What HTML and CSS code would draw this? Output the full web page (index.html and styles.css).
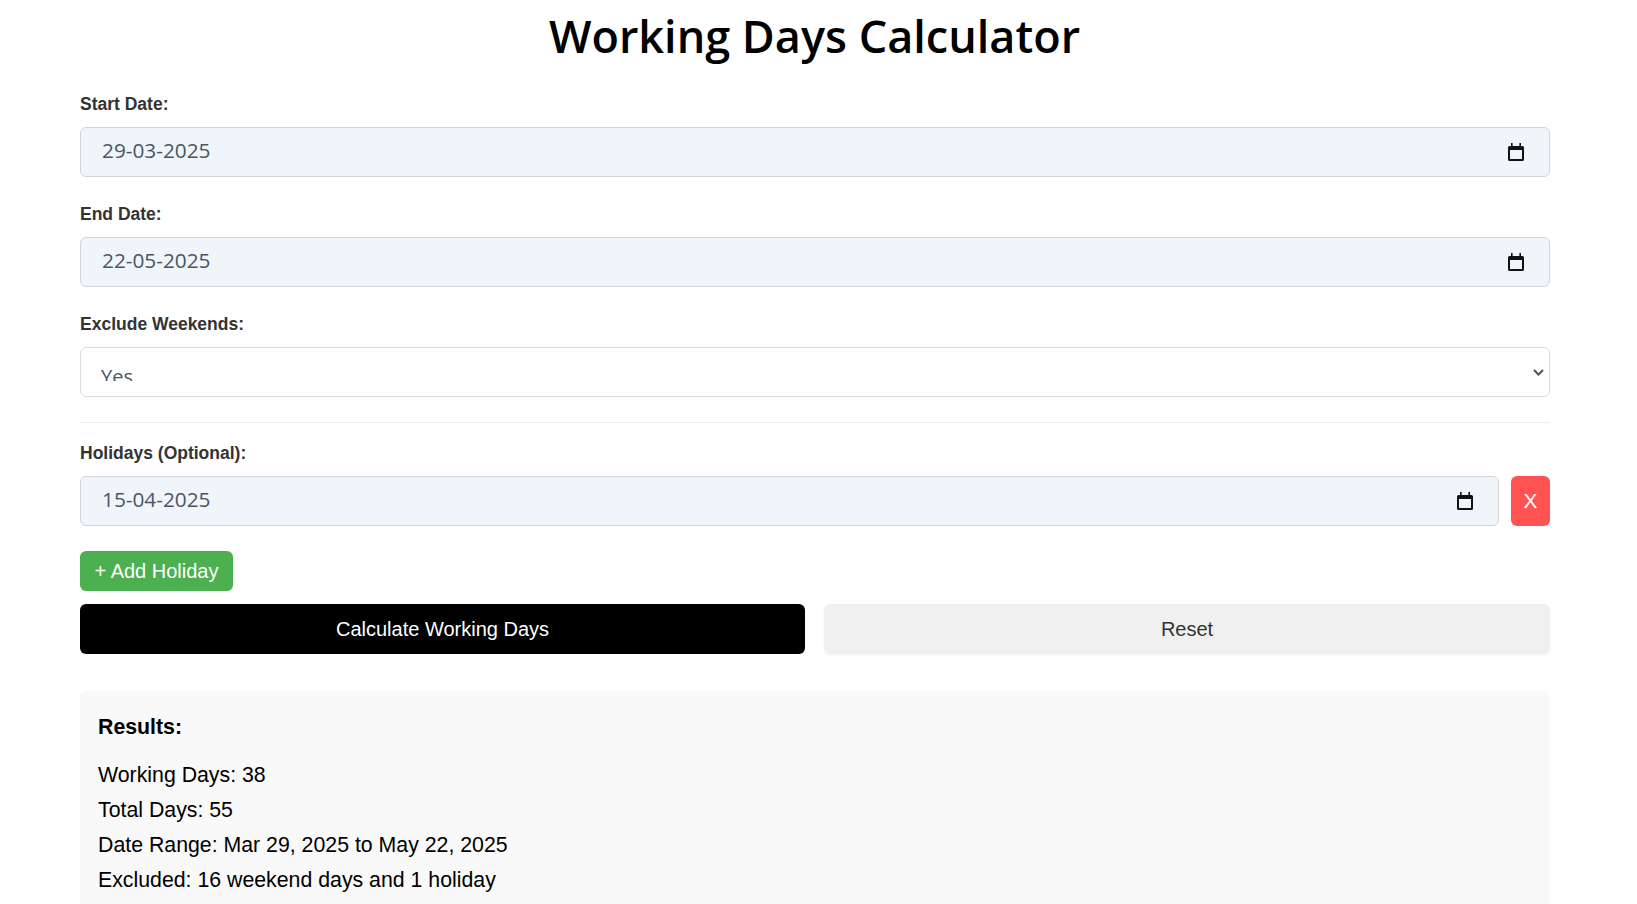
FILE: index.html
```html
<!DOCTYPE html>
<html lang="en">
<head>
    <meta charset="UTF-8">
    <meta name="viewport" content="width=device-width, initial-scale=1.0">
    <title>Working Days Calculator</title>
    <link rel="stylesheet" href="styles.css">
</head>
<body>
    <div class="calculator">
        <h1 class="page-title">Working Days Calculator</h1>

        <div class="form-group">
            <label class="form-label">Start Date:</label>
            <div class="date-field">
                <span class="date-value">29-03-2025</span>
                <svg class="calendar-icon" width="16" height="18" viewBox="0 0 16 18"><path d="M1.5 3h13A1.5 1.5 0 0 1 16 4.500v12a1.500 1.500 0 0 1-1.500 1.500h-13A1.500 1.500 0 0 1 0 16.500v-12A1.500 1.500 0 0 1 1.500 3zM2 7v9h12V7z" fill="#111" fill-rule="evenodd"/><path d="M3 0h1.600v3H3zM11.400 0H13v3h-1.600z" fill="#111"/></svg>
            </div>
        </div>

        <div class="form-group">
            <label class="form-label">End Date:</label>
            <div class="date-field">
                <span class="date-value">22-05-2025</span>
                <svg class="calendar-icon" width="16" height="18" viewBox="0 0 16 18"><path d="M1.5 3h13A1.5 1.5 0 0 1 16 4.500v12a1.500 1.500 0 0 1-1.500 1.500h-13A1.500 1.500 0 0 1 0 16.500v-12A1.500 1.500 0 0 1 1.500 3zM2 7v9h12V7z" fill="#111" fill-rule="evenodd"/><path d="M3 0h1.600v3H3zM11.400 0H13v3h-1.600z" fill="#111"/></svg>
            </div>
        </div>

        <div class="form-group form-group-last">
            <label class="form-label">Exclude Weekends:</label>
            <select class="select-field">
                <option>Yes</option>
                <option>No</option>
            </select>
        </div>

        <div class="holidays">
            <label class="form-label">Holidays (Optional):</label>
            <div class="holiday-row">
                <div class="date-field">
                    <span class="date-value">15-04-2025</span>
                    <svg class="calendar-icon" width="16" height="18" viewBox="0 0 16 18"><path d="M1.5 3h13A1.5 1.5 0 0 1 16 4.500v12a1.500 1.500 0 0 1-1.500 1.500h-13A1.500 1.500 0 0 1 0 16.500v-12A1.500 1.500 0 0 1 1.500 3zM2 7v9h12V7z" fill="#111" fill-rule="evenodd"/><path d="M3 0h1.600v3H3zM11.400 0H13v3h-1.600z" fill="#111"/></svg>
                </div>
                <button class="remove-button">X</button>
            </div>
            <button class="add-button">+ Add Holiday</button>
        </div>

        <div class="actions">
            <button class="calculate-button">Calculate Working Days</button>
            <button class="reset-button">Reset</button>
        </div>

        <div class="results">
            <h3 class="results-title">Results:</h3>
            <p class="results-line">Working Days: 38</p>
            <p class="results-line">Total Days: 55</p>
            <p class="results-line">Date Range: Mar 29, 2025 to May 22, 2025</p>
            <p class="results-line">Excluded: 16 weekend days and 1 holiday</p>
        </div>
    </div>
</body>
</html>
```

FILE: styles.css
```css
* {
    margin: 0;
    padding: 0;
    box-sizing: border-box;
}

html, body {
    height: 904px;
    overflow: hidden;
    background: #fff;
}

body {
    font-family: 'Liberation Sans', Arial, sans-serif;
    color: #333;
}

.calculator {
    width: 1470px;
    margin-left: 80px;
}

.page-title {
    font-family: 'Open Sans', sans-serif;
    font-size: 45px;
    font-weight: 600;
    line-height: 61px;
    color: #000;
    text-align: center;
    padding: 5px 1px 28px 0;
}

.form-group {
    margin-bottom: 27px;
}

.form-group-last {
    margin-bottom: 25px;
}

.form-label {
    display: block;
    font-size: 17.5px;
    font-weight: 700;
    line-height: 20px;
    margin-bottom: 13px;
}

.date-field {
    display: flex;
    flex: 1;
    align-items: center;
    justify-content: space-between;
    height: 50px;
    padding: 0 25px 0 21px;
    background: #f0f5f9;
    border: 1px solid #d0d5dd;
    border-radius: 6px;
}

.date-value {
    font-family: 'Open Sans', sans-serif;
    font-size: 20.8px;
    color: #4a5568;
    padding-bottom: 4px;
}

.calendar-icon {
    display: block;
}

.select-field {
    display: block;
    width: 100%;
    height: 50px;
    padding: 15px 20px;
    font-family: 'Open Sans', sans-serif;
    font-size: 20px;
    color: #4a5568;
    background: #fff url("data:image/svg+xml,%3Csvg xmlns='http://www.w3.org/2000/svg' width='11' height='7' viewBox='0 0 11 7'%3E%3Cpath d='M1 1l4.500 4.500L10 1' fill='none' stroke='%234a5568' stroke-width='2'/%3E%3C/svg%3E") no-repeat right 5px top 21px;
    border: 1px solid #d8dce3;
    border-radius: 6px;
    appearance: none;
}

.holidays {
    border-top: 1px solid #eee;
    padding-top: 20px;
}

.holiday-row {
    display: flex;
    gap: 12px;
    margin-bottom: 25px;
}

.remove-button {
    width: 39px;
    height: 50px;
    font-family: 'Liberation Sans', Arial, sans-serif;
    font-size: 20.8px;
    color: #fff;
    background: #ff5252;
    border: none;
    border-radius: 6px;
}

.add-button {
    display: block;
    width: 153px;
    height: 40px;
    font-family: 'Liberation Sans', Arial, sans-serif;
    font-size: 20px;
    color: #fff;
    background: #4caf50;
    border: none;
    border-radius: 6px;
}

.actions {
    display: flex;
    gap: 19px;
    margin-top: 13px;
}

.calculate-button,
.reset-button {
    height: 50px;
    font-family: 'Liberation Sans', Arial, sans-serif;
    font-size: 20px;
    border: none;
    border-radius: 6px;
}

.calculate-button {
    width: 725px;
    color: #fff;
    background: #000;
}

.reset-button {
    flex: 1;
    color: #333;
    background: #f0f0f0;
    box-shadow: 0 1px 3px rgba(0, 0, 0, 0.05);
}

.results {
    margin-top: 37px;
    height: 213px;
    padding: 21px 18px 0;
    background: #f9f9f9;
    border-radius: 6px 6px 0 0;
}

.results-title {
    font-size: 21.3px;
    font-weight: 700;
    line-height: 30px;
    color: #000;
    margin-bottom: 16px;
}

.results-line {
    font-size: 21.3px;
    line-height: 35px;
    color: #000;
}
```
